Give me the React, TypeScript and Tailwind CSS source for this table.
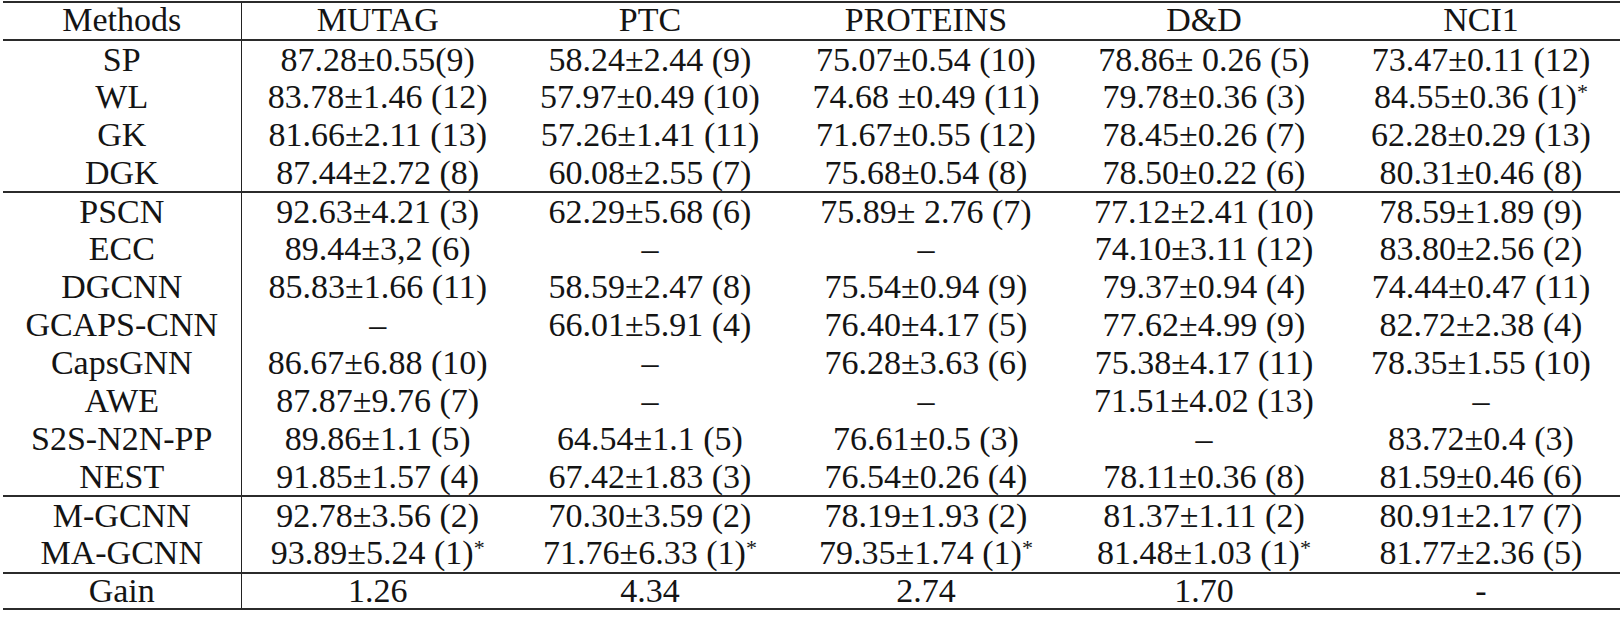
/* Graph classification results table */

type Row = { name: string; cells: string[] };

const header = ["MUTAG", "PTC", "PROTEINS", "D&D", "NCI1"];

const groups: { rowH: string; rows: Row[] }[] = [
  {
    rowH: "h-[38px]",
    rows: [
      { name: "SP", cells: ["87.28±0.55(9)", "58.24±2.44 (9)", "75.07±0.54 (10)", "78.86± 0.26 (5)", "73.47±0.11 (12)"] },
      { name: "WL", cells: ["83.78±1.46 (12)", "57.97±0.49 (10)", "74.68 ±0.49 (11)", "79.78±0.36 (3)", "84.55±0.36 (1)*"] },
      { name: "GK", cells: ["81.66±2.11 (13)", "57.26±1.41 (11)", "71.67±0.55 (12)", "78.45±0.26 (7)", "62.28±0.29 (13)"] },
      { name: "DGK", cells: ["87.44±2.72 (8)", "60.08±2.55 (7)", "75.68±0.54 (8)", "78.50±0.22 (6)", "80.31±0.46 (8)"] },
    ],
  },
  {
    rowH: "h-[38px]",
    rows: [
      { name: "PSCN", cells: ["92.63±4.21 (3)", "62.29±5.68 (6)", "75.89± 2.76 (7)", "77.12±2.41 (10)", "78.59±1.89 (9)"] },
      { name: "ECC", cells: ["89.44±3,2 (6)", "–", "–", "74.10±3.11 (12)", "83.80±2.56 (2)"] },
      { name: "DGCNN", cells: ["85.83±1.66 (11)", "58.59±2.47 (8)", "75.54±0.94 (9)", "79.37±0.94 (4)", "74.44±0.47 (11)"] },
      { name: "GCAPS-CNN", cells: ["–", "66.01±5.91 (4)", "76.40±4.17 (5)", "77.62±4.99 (9)", "82.72±2.38 (4)"] },
      { name: "CapsGNN", cells: ["86.67±6.88 (10)", "–", "76.28±3.63 (6)", "75.38±4.17 (11)", "78.35±1.55 (10)"] },
      { name: "AWE", cells: ["87.87±9.76 (7)", "–", "–", "71.51±4.02 (13)", "–"] },
      { name: "S2S-N2N-PP", cells: ["89.86±1.1 (5)", "64.54±1.1 (5)", "76.61±0.5 (3)", "–", "83.72±0.4 (3)"] },
      { name: "NEST", cells: ["91.85±1.57 (4)", "67.42±1.83 (3)", "76.54±0.26 (4)", "78.11±0.36 (8)", "81.59±0.46 (6)"] },
    ],
  },
  {
    rowH: "h-[38.5px]",
    rows: [
      { name: "M-GCNN", cells: ["92.78±3.56 (2)", "70.30±3.59 (2)", "78.19±1.93 (2)", "81.37±1.11 (2)", "80.91±2.17 (7)"] },
      { name: "MA-GCNN", cells: ["93.89±5.24 (1)*", "71.76±6.33 (1)*", "79.35±1.74 (1)*", "81.48±1.03 (1)*", "81.77±2.36 (5)"] },
    ],
  },
  {
    rowH: "h-[36px]",
    rows: [{ name: "Gain", cells: ["1.26", "4.34", "2.74", "1.70", "-"] }],
  },
];

function Value({ text }: { text: string }) {
  const star = text.endsWith("*");
  return (
    <td className="p-0 text-center align-middle whitespace-pre">
      {star ? text.slice(0, -1) : text}
      {star && <span className="relative -top-[9px] text-[22px]">*</span>}
    </td>
  );
}

export default function App() {
  return (
    <div className="w-[1620px] h-[621px] bg-white pt-[1px] pl-[3px] overflow-hidden">
      <table
        className="w-[1617px] table-fixed border-collapse text-[34px] leading-none text-[#141414]"
        style={{ fontFamily: '"Liberation Serif"' }}
      >
        <colgroup>
          <col className="w-[238px]" />
          <col className="w-[273px]" />
          <col className="w-[272px]" />
          <col className="w-[280px]" />
          <col className="w-[276px]" />
          <col />
        </colgroup>
        <thead className="border-t-2 border-[#2b2b2b]">
          <tr className="h-[37px]">
            <th className="p-0 pb-[2px] font-normal text-center border-r border-[#222]">Methods</th>
            {header.map((h) => (
              <th key={h} className="p-0 pb-[2px] font-normal text-center">
                {h}
              </th>
            ))}
          </tr>
        </thead>
        {groups.map((g, gi) => (
          <tbody key={gi} className="border-t-2 border-b-2 border-[#2b2b2b]">
            {g.rows.map((r) => (
              <tr key={r.name} className={g.rowH}>
                <td className="p-0 text-center align-middle border-r border-[#222]">{r.name}</td>
                {r.cells.map((c, i) => (
                  <Value key={i} text={c} />
                ))}
              </tr>
            ))}
          </tbody>
        ))}
      </table>
    </div>
  );
}
